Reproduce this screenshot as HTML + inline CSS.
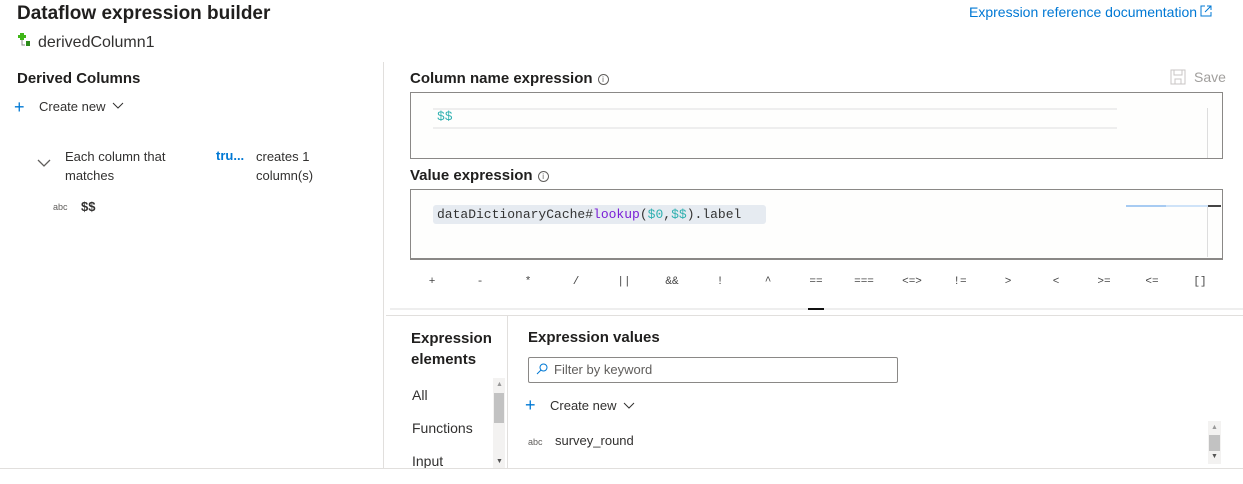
<!DOCTYPE html>
<html><head><style>
body{margin:0;width:1243px;height:484px;background:#fff;font-family:"Liberation Sans",sans-serif;color:#323130;position:relative;overflow:hidden}
.a{position:absolute;white-space:nowrap}
.b{font-weight:bold}
.mono{font-family:"Liberation Mono",monospace}
.info{display:inline-block;width:9px;height:9px;border:1px solid #605e5c;border-radius:50%;font-size:8px;line-height:9px;text-align:center;vertical-align:1px;margin-left:5px;color:#605e5c;font-weight:normal}
.op{position:absolute;top:276px;width:30px;text-align:center;font-family:"Liberation Mono",monospace;font-size:11px;color:#444}
</style></head><body>
<div class="a b" style="left:17px;top:3px;font-size:19px;color:#201f1e">Dataflow expression builder</div>
<svg class="a" style="left:17px;top:32px" width="16" height="16"><rect x="3" y="1" width="4" height="7" fill="#3fb618"/><rect x="1" y="3" width="8" height="3" fill="#3fb618"/><path d="M5 8v5h3" stroke="#888" fill="none"/><rect x="9" y="9" width="4" height="5" fill="#2b8a1a"/></svg>
<div class="a" style="left:38px;top:34px;font-size:16px">derivedColumn1</div>
<div class="a" style="left:969px;top:4px;font-size:14px;color:#0078d4">Expression reference documentation</div>
<svg class="a" style="left:1199px;top:4px" width="14" height="14"><path d="M6 2H2v10h10V8M8 2h4v4M12 2L6 8" stroke="#0078d4" fill="none"/></svg>
<div class="a" style="left:383px;top:62px;width:1px;height:406px;background:#e1dfdd"></div>
<div class="a b" style="left:17px;top:70px;font-size:15px;color:#201f1e">Derived Columns</div>
<div class="a" style="left:14px;top:97px;font-size:18px;color:#0078d4;font-weight:300">+</div>
<div class="a" style="left:39px;top:99px;font-size:13px">Create new</div>
<svg class="a" style="left:112px;top:101px" width="12" height="10"><path d="M1 2l5 5 5-5" stroke="#323130" fill="none"/></svg>
<svg class="a" style="left:37px;top:158px" width="14" height="10"><path d="M1 2l6 6 6-6" stroke="#605e5c" fill="none" stroke-width="1.3"/></svg>
<div class="a" style="left:65px;top:147px;font-size:13px;line-height:19px">Each column that<br>matches</div>
<div class="a b" style="left:216px;top:148px;font-size:13px;color:#0078d4">tru...</div>
<div class="a" style="left:256px;top:147px;font-size:13px;line-height:19px">creates 1<br>column(s)</div>
<div class="a" style="left:53px;top:202px;font-size:9px;color:#605e5c">abc</div>
<div class="a b" style="left:81px;top:199px;font-size:13px">$$</div>

<div class="a b" style="left:410px;top:70px;font-size:15px;color:#201f1e">Column name expression<span class="info">i</span></div>
<svg class="a" style="left:1170px;top:69px" width="16" height="16"><rect x="1" y="1" width="14" height="14" fill="none" stroke="#c8c6c4"/><rect x="4" y="1" width="8" height="5" fill="none" stroke="#c8c6c4"/><rect x="5" y="10" width="6" height="5" fill="none" stroke="#c8c6c4"/></svg>
<div class="a" style="left:1194px;top:69px;font-size:14px;color:#a19f9d">Save</div>
<div class="a" style="left:410px;top:92px;width:811px;height:65px;border:1px solid #8a8886;background:#fefefd"></div>
<div class="a" style="left:433px;top:108px;width:684px;height:17px;border-top:2px solid #eee;border-bottom:2px solid #eee"></div>
<div class="a mono" style="left:437px;top:109px;font-size:13px;color:#2fb0b0">$$</div>
<div class="a" style="left:1207px;top:108px;width:1px;height:50px;background:#ddd"></div>
<div class="a b" style="left:410px;top:167px;font-size:15px;color:#201f1e">Value expression<span class="info">i</span></div>
<div class="a" style="left:410px;top:189px;width:811px;height:68px;border:1px solid #8a8886;border-bottom:2px solid #8a8886;background:#fefefd"></div>
<div class="a" style="left:433px;top:205px;width:333px;height:19px;background:#e6ebf1;border-radius:3px"></div>
<div class="a mono" style="left:437px;top:207px;font-size:13px;color:#333">dataDictionaryCache#<span style="color:#7a1fd6">lookup</span>(<span style="color:#2fb0b0">$0</span>,<span style="color:#2fb0b0">$$</span>).label</div>
<div class="a" style="left:1126px;top:205px;width:82px;height:2px;background:#cfe3f8"></div>
<div class="a" style="left:1126px;top:205px;width:40px;height:2px;background:#a7cbf2"></div>
<div class="a" style="left:1208px;top:205px;width:13px;height:2px;background:#444"></div>
<div class="a" style="left:1207px;top:207px;width:1px;height:50px;background:#ddd"></div>
<div class="op" style="left:417px">+</div><div class="op" style="left:465px">-</div><div class="op" style="left:513px">*</div><div class="op" style="left:561px">/</div><div class="op" style="left:609px">||</div><div class="op" style="left:657px">&amp;&amp;</div><div class="op" style="left:705px">!</div><div class="op" style="left:753px">^</div><div class="op" style="left:801px">==</div><div class="op" style="left:849px">===</div><div class="op" style="left:897px">&lt;=&gt;</div><div class="op" style="left:945px">!=</div><div class="op" style="left:993px">&gt;</div><div class="op" style="left:1041px">&lt;</div><div class="op" style="left:1089px">&gt;=</div><div class="op" style="left:1137px">&lt;=</div><div class="op" style="left:1185px">[]</div>
<div class="a" style="left:390px;top:308px;width:853px;height:2px;background:#eee"></div>
<div class="a" style="left:808px;top:308px;width:16px;height:2px;background:#111"></div>
<div class="a" style="left:386px;top:315px;width:857px;height:1px;background:#e1dfdd"></div>
<div class="a" style="left:507px;top:316px;width:1px;height:152px;background:#e1dfdd"></div>
<div class="a b" style="left:411px;top:328px;font-size:15px;line-height:21px;color:#201f1e">Expression<br>elements</div>
<div class="a" style="left:412px;top:387px;font-size:14px">All</div>
<div class="a" style="left:412px;top:420px;font-size:14px">Functions</div>
<div class="a" style="left:412px;top:453px;font-size:14px">Input</div>
<div class="a" style="left:493px;top:378px;width:12px;height:90px;background:#f3f2f1"></div>
<div class="a" style="left:494px;top:393px;width:10px;height:30px;background:#c2c2c2"></div>
<div class="a" style="left:496px;top:381px;font-size:7px;color:#999">▲</div>
<div class="a" style="left:496px;top:458px;font-size:7px;color:#555">▼</div>
<div class="a b" style="left:528px;top:329px;font-size:15px;color:#201f1e">Expression values</div>
<div class="a" style="left:528px;top:357px;width:368px;height:24px;border:1px solid #8a8886;border-radius:2px"></div>
<svg class="a" style="left:536px;top:363px" width="12" height="12"><circle cx="7.5" cy="4.5" r="3.5" stroke="#0078d4" fill="none"/><path d="M5 7L1 11" stroke="#0078d4"/></svg>
<div class="a" style="left:554px;top:362px;font-size:13px;color:#605e5c">Filter by keyword</div>
<div class="a" style="left:525px;top:395px;font-size:18px;color:#0078d4;font-weight:300">+</div>
<div class="a" style="left:550px;top:398px;font-size:13px">Create new</div>
<svg class="a" style="left:623px;top:401px" width="12" height="10"><path d="M1 2l5 5 5-5" stroke="#323130" fill="none"/></svg>
<div class="a" style="left:528px;top:437px;font-size:9px;color:#605e5c">abc</div>
<div class="a" style="left:555px;top:433px;font-size:13px">survey_round</div>
<div class="a" style="left:1208px;top:421px;width:13px;height:43px;background:#f3f2f1"></div>
<div class="a" style="left:1209px;top:435px;width:11px;height:16px;background:#c2c2c2"></div>
<div class="a" style="left:1211px;top:424px;font-size:7px;color:#999">▲</div>
<div class="a" style="left:1211px;top:453px;font-size:7px;color:#555">▼</div>
<div class="a" style="left:0;top:468px;width:1243px;height:1px;background:#e1dfdd"></div>
</body></html>
